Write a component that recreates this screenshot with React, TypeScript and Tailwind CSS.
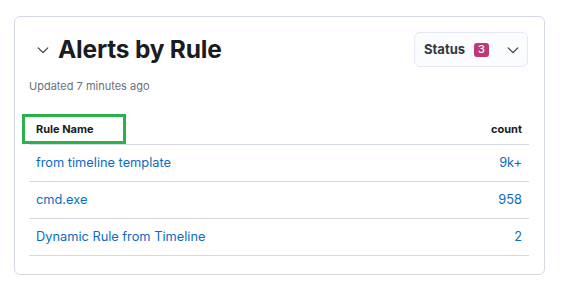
import React from "react";

const rows = [
  { name: "from timeline template", count: "9k+" },
  { name: "cmd.exe", count: "958" },
  { name: "Dynamic Rule from Timeline", count: "2" },
];

function Chevron({ className }: { className?: string }) {
  return (
    <svg className={className} viewBox="0 0 16 16" fill="none" stroke="currentColor" strokeWidth={1.3}>
      <path d="M2.5 5.5 8 11l5.5-5.5" strokeLinecap="round" strokeLinejoin="round" />
    </svg>
  );
}

export default function App() {
  return (
    <div className="min-h-screen bg-white pt-4 pl-[14px] font-['Inter',sans-serif]">
      <div className="w-[531px] h-[259px] rounded-md border border-[#d3dae6] bg-white pt-[15px] pl-[14px] pr-[15px]">
        {/* Header */}
        <div className="flex items-center justify-between h-[35px]">
          <div className="flex items-center">
            <Chevron className="w-[14px] h-[14px] ml-[7px] mr-[8px] text-[#343741]" />
            <h2 className="text-[24.5px] font-bold tracking-[-0.2px] text-[#1a1c21] leading-none">
              Alerts by Rule
            </h2>
          </div>
          <button className="flex items-center h-[35px] w-[114px] mr-[1px] rounded-md border border-[#e3e8f2] bg-[#fbfcfd] pl-[9px] pr-[7px]">
            <span className="text-[13px] font-bold text-[#343741]">Status</span>
            <span className="ml-[9px] flex items-center justify-center w-[15px] h-[14px] rounded-[3px] bg-[#bd3a72] text-[11px] font-medium text-white leading-none">
              3
            </span>
            <Chevron className="w-[14px] h-[14px] ml-auto text-[#343741]" />
          </button>
        </div>

        <p className="mt-[11px] text-[11px] leading-4 text-[#69707d]">Updated 7 minutes ago</p>

        {/* Table */}
        <div className="mt-[21px] w-[500px]">
          <div className="relative flex items-center h-[30px] border-b border-[#d3dae6] text-[11px] font-bold text-[#1a1c21]">
            <div className="flex-1 pl-[7px]">Rule Name</div>
            <div className="pr-[7px]">count</div>
            <span className="absolute left-[-7px] top-[-1px] w-[104px] h-[30px] border-[3px] border-[#2bb04a]" />
          </div>
          {rows.map((r) => (
            <div
              key={r.name}
              className="flex items-center h-[37px] border-b border-[#d3dae6] text-[12.8px] text-[#0b6bc4]"
            >
              <div className="flex-1 pl-[7px]">{r.name}</div>
              <div className="pr-[7px]">{r.count}</div>
            </div>
          ))}
        </div>
      </div>
    </div>
  );
}
